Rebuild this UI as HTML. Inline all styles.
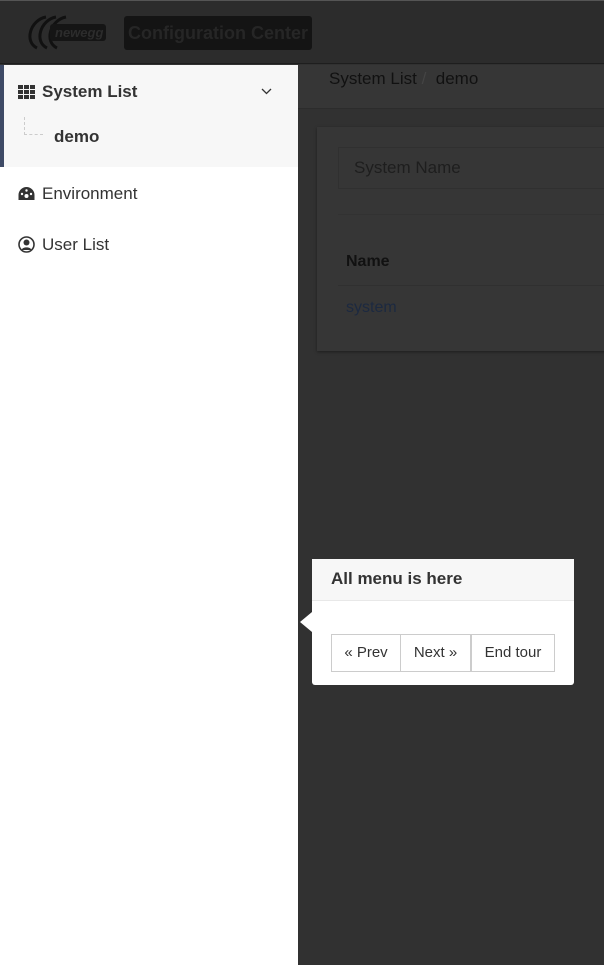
<!DOCTYPE html>
<html><head><style>
*{margin:0;padding:0;box-sizing:border-box}
body{width:604px;height:965px;overflow:hidden;background:#313131;font-family:"Liberation Sans",sans-serif;position:relative}
.hdr{position:absolute;left:0;top:0;width:604px;height:64px;background:#2c2c2c;border-top:1px solid #555;border-bottom:1px solid #1e1e1e}
.cc{position:absolute;left:124px;top:15px;width:188px;height:34px;background:#141414;border-radius:3px;color:#262626;font-weight:bold;font-size:18px;line-height:34px;text-align:center}
.side{position:absolute;left:0;top:65px;width:298px;height:900px;background:#fff}
.sel{position:absolute;left:0;top:0;width:298px;height:102px;background:#f7f7f7;border-left:4px solid #3e4a66}
.t{position:absolute;font-size:17px;color:#333}
.bc{position:absolute;left:298px;top:65px;width:306px;height:44px;background:#363636;border-bottom:1px solid #2c2c2c}
.card{position:absolute;left:317px;top:127px;width:290px;height:224px;background:#363636;box-shadow:0 1px 3px rgba(0,0,0,.4)}
.pop{position:absolute;left:312px;top:559px;width:262px;height:126px;background:#fff;border-radius:3px}
.ph{height:42px;background:#f7f7f7;border-bottom:1px solid #e8e8e8;font-weight:bold;font-size:17px;color:#333;padding:10px 19px}
.btns{position:absolute;left:19px;top:75px;display:flex}
.btns div{height:38px;border:1px solid #ccc;font-size:15px;color:#333;line-height:36px;text-align:center;margin-right:-1px}
.arrow{position:absolute;left:300px;top:612px;width:0;height:0;border-top:10px solid transparent;border-bottom:10px solid transparent;border-right:12px solid #fff}
</style></head><body>
<div class="hdr">
<svg style="position:absolute;left:22px;top:13px" width="86" height="38" viewBox="0 0 86 38"><g fill="none" stroke="#111" stroke-width="3"><path d="M24 3 C8 6 2 28 15 34"/><path d="M34 3 C18 6 12 28 25 34"/><path d="M44 3 C28 6 22 28 35 34"/></g><rect x="28" y="10" width="56" height="17" rx="3" fill="#151515"/><text x="33" y="23" font-size="13" font-style="italic" font-weight="bold" fill="#2c2c2c" font-family="Liberation Sans">newegg</text></svg>
<div class="cc">Configuration Center</div>
</div>
<div class="side">
<div class="sel"></div>
<svg style="position:absolute;left:18px;top:20px" width="17" height="14" viewBox="0 0 17 14" fill="#333"><rect x="0" y="0" width="5" height="4"/><rect x="6" y="0" width="5" height="4"/><rect x="12" y="0" width="5" height="4"/><rect x="0" y="5" width="5" height="4"/><rect x="6" y="5" width="5" height="4"/><rect x="12" y="5" width="5" height="4"/><rect x="0" y="10" width="5" height="4"/><rect x="6" y="10" width="5" height="4"/><rect x="12" y="10" width="5" height="4"/></svg>
<div class="t" style="left:42px;top:17px;font-weight:bold">System List</div>
<svg style="position:absolute;left:261px;top:23px" width="11" height="7"><path d="M1 1 L5.5 5.5 L10 1" stroke="#333" stroke-width="1.3" fill="none"/></svg>
<div style="position:absolute;left:24px;top:52px;width:19px;height:18px;border-left:1px dashed #ccc;border-bottom:1px dashed #ccc"></div>
<div class="t" style="left:54px;top:62px;font-weight:bold">demo</div>
<svg style="position:absolute;left:18px;top:121px" width="17" height="15" viewBox="0 0 17 15"><path d="M8.5 1 A8 8 0 0 0 0.5 9 L0.5 14 L16.5 14 L16.5 9 A8 8 0 0 0 8.5 1Z" fill="#333"/><circle cx="8.5" cy="10" r="2" fill="#fff"/><circle cx="4" cy="8" r="1.2" fill="#fff"/><circle cx="13" cy="8" r="1.2" fill="#fff"/><circle cx="8.5" cy="4.5" r="1.2" fill="#fff"/></svg>
<div class="t" style="left:42px;top:119px">Environment</div>
<svg style="position:absolute;left:18px;top:171px" width="17" height="17" viewBox="0 0 17 17"><circle cx="8.5" cy="8.5" r="7.5" fill="none" stroke="#333" stroke-width="1.6"/><circle cx="8.5" cy="6.5" r="3" fill="#333"/><path d="M3.5 14 C4.5 10.5 12.5 10.5 13.5 14Z" fill="#333"/></svg>
<div class="t" style="left:42px;top:170px">User List</div>
</div>
<div class="bc"><div style="position:absolute;left:31px;top:4px;font-size:17px;color:#111">System List <span style="color:#444">/</span>&nbsp; demo</div></div>
<div class="card">
<div style="position:absolute;left:21px;top:20px;width:280px;height:42px;border:1px solid #303030;font-size:17px;color:#1e1e1e;padding:10px 15px">System Name</div>
<div style="position:absolute;left:21px;top:87px;width:280px;border-top:1px solid #323232"></div>
<div style="position:absolute;left:29px;top:126px;font-size:16px;font-weight:bold;color:#111">Name</div>
<div style="position:absolute;left:21px;top:158px;width:280px;border-top:1px solid #303030"></div>
<div style="position:absolute;left:29px;top:172px;font-size:16px;color:#1c2940">system</div>
</div>
<div class="arrow"></div>
<div class="pop">
<div class="ph">All menu is here</div>
<div class="btns"><div style="width:70px">« Prev</div><div style="width:71px">Next »</div><div style="width:84px;margin-left:1px">End tour</div></div>
</div>
</body></html>
